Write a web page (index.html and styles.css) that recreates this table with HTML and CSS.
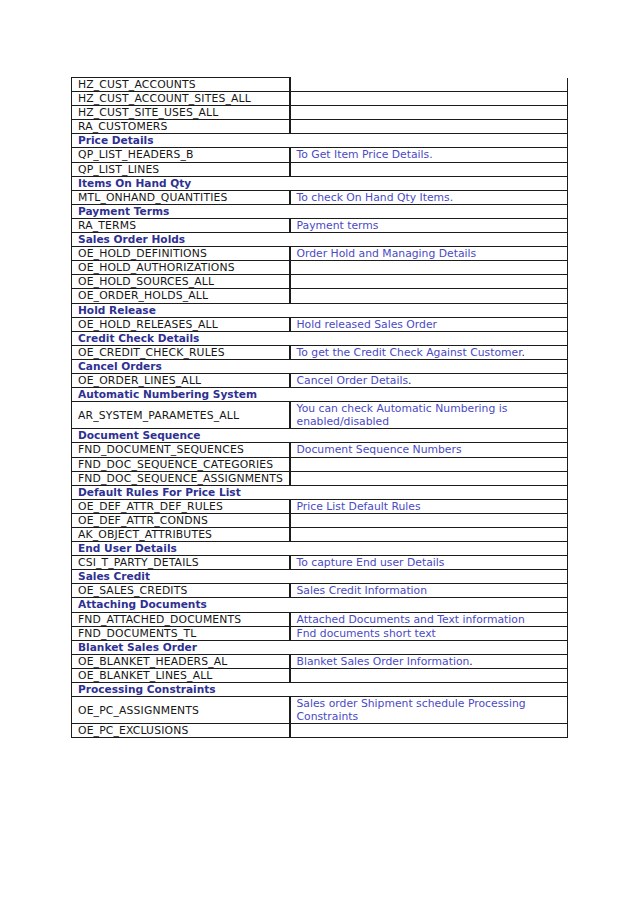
FILE: index.html
```html
<!DOCTYPE html>
<html lang="en">
<head>
<meta charset="utf-8">
<title>Oracle Order Management Tables</title>
<link rel="stylesheet" href="styles.css">
</head>
<body>
<div class="page">
<table class="tables">
<colgroup><col class="col-name"><col class="col-desc"></colgroup>
<tbody>
<tr class="first"><td class="name">HZ_CUST_ACCOUNTS</td><td class="desc"></td></tr>
<tr><td class="name">HZ_CUST_ACCOUNT_SITES_ALL</td><td class="desc"></td></tr>
<tr><td class="name">HZ_CUST_SITE_USES_ALL</td><td class="desc"></td></tr>
<tr><td class="name">RA_CUSTOMERS</td><td class="desc"></td></tr>
<tr><td class="section" colspan="2">Price Details</td></tr>
<tr><td class="name">QP_LIST_HEADERS_B</td><td class="desc">To Get Item Price Details.</td></tr>
<tr><td class="name">QP_LIST_LINES</td><td class="desc"></td></tr>
<tr><td class="section" colspan="2">Items On Hand Qty</td></tr>
<tr><td class="name">MTL_ONHAND_QUANTITIES</td><td class="desc">To check On Hand Qty Items.</td></tr>
<tr><td class="section" colspan="2">Payment Terms</td></tr>
<tr><td class="name">RA_TERMS</td><td class="desc">Payment terms</td></tr>
<tr><td class="section" colspan="2">Sales Order Holds</td></tr>
<tr><td class="name">OE_HOLD_DEFINITIONS</td><td class="desc">Order Hold and Managing Details</td></tr>
<tr><td class="name">OE_HOLD_AUTHORIZATIONS</td><td class="desc"></td></tr>
<tr><td class="name">OE_HOLD_SOURCES_ALL</td><td class="desc"></td></tr>
<tr><td class="name">OE_ORDER_HOLDS_ALL</td><td class="desc"></td></tr>
<tr><td class="section" colspan="2">Hold Release</td></tr>
<tr><td class="name">OE_HOLD_RELEASES_ALL</td><td class="desc">Hold released Sales Order</td></tr>
<tr><td class="section" colspan="2">Credit Check Details</td></tr>
<tr><td class="name">OE_CREDIT_CHECK_RULES</td><td class="desc">To get the Credit Check Against Customer<span class="dot">.</span></td></tr>
<tr><td class="section" colspan="2">Cancel Orders</td></tr>
<tr><td class="name">OE_ORDER_LINES_ALL</td><td class="desc">Cancel Order Details<span class="dot">.</span></td></tr>
<tr><td class="section" colspan="2">Automatic Numbering System</td></tr>
<tr><td class="name">AR_SYSTEM_PARAMETES_ALL</td><td class="desc">You can check Automatic Numbering is enabled/disabled</td></tr>
<tr><td class="section" colspan="2">Document Sequence</td></tr>
<tr><td class="name">FND_DOCUMENT_SEQUENCES</td><td class="desc">Document Sequence Numbers</td></tr>
<tr><td class="name">FND_DOC_SEQUENCE_CATEGORIES</td><td class="desc"></td></tr>
<tr><td class="name">FND_DOC_SEQUENCE_ASSIGNMENTS</td><td class="desc"></td></tr>
<tr><td class="section" colspan="2">Default Rules For Price List</td></tr>
<tr><td class="name">OE_DEF_ATTR_DEF_RULES</td><td class="desc">Price List Default Rules</td></tr>
<tr><td class="name">OE_DEF_ATTR_CONDNS</td><td class="desc"></td></tr>
<tr><td class="name">AK_OBJECT_ATTRIBUTES</td><td class="desc"></td></tr>
<tr><td class="section" colspan="2">End User Details</td></tr>
<tr><td class="name">CSI_T_PARTY_DETAILS</td><td class="desc">To capture End user Details</td></tr>
<tr><td class="section" colspan="2">Sales Credit</td></tr>
<tr><td class="name">OE_SALES_CREDITS</td><td class="desc">Sales Credit Information</td></tr>
<tr><td class="section" colspan="2">Attaching Documents</td></tr>
<tr><td class="name">FND_ATTACHED_DOCUMENTS</td><td class="desc">Attached Documents and Text information</td></tr>
<tr><td class="name">FND_DOCUMENTS_TL</td><td class="desc">Fnd documents short text</td></tr>
<tr><td class="section" colspan="2">Blanket Sales Order</td></tr>
<tr><td class="name">OE_BLANKET_HEADERS_AL</td><td class="desc">Blanket Sales Order Information<span class="dot">.</span></td></tr>
<tr><td class="name">OE_BLANKET_LINES_ALL</td><td class="desc"></td></tr>
<tr><td class="section" colspan="2">Processing Constraints</td></tr>
<tr><td class="name">OE_PC_ASSIGNMENTS</td><td class="desc">Sales order Shipment schedule Processing Constraints</td></tr>
<tr><td class="name">OE_PC_EXCLUSIONS</td><td class="desc"></td></tr>
</tbody>
</table>
</div>
</body>
</html>
```

FILE: styles.css
```css
html, body {
  margin: 0;
  padding: 0;
  background: #ffffff;
}

.page {
  padding: 77px 0 0 71px;
}

.tables {
  border-collapse: collapse;
  width: 497px;
  table-layout: fixed;
  font-family: "DejaVu Sans", Verdana, sans-serif;
  font-size: 10.8px;
  line-height: 13.1px;
}

.col-name {
  width: 218px;
}

.tables td {
  border: 1px solid #1c1c1c;
  padding: 0 5px 0 6px;
  vertical-align: middle;
  white-space: normal;
}

.tables td.name {
  color: #161616;
  border-right: 2px solid #1c1c1c;
  white-space: nowrap;
  letter-spacing: 0.15px;
}

.tables td.desc {
  color: #4a4ac4;
}

.tables td.section {
  color: #2e3192;
  font-weight: bold;
  font-size: 10.6px;
}

.tables .first td.desc {
  border-top: none;
}

.dot {
  color: #161616;
}
```
